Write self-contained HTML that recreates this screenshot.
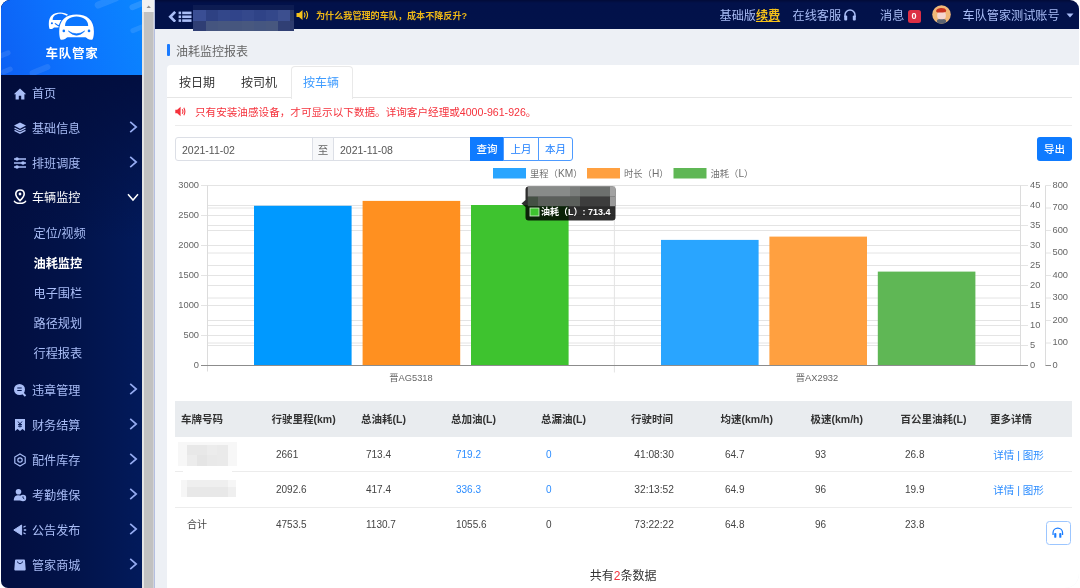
<!DOCTYPE html>
<html lang="zh-CN">
<head>
<meta charset="utf-8">
<title>油耗监控报表</title>
<style>
*{box-sizing:border-box;margin:0;padding:0}
html,body{width:1080px;height:588px;overflow:hidden;background:#fff}
body{font-family:"Liberation Sans","Noto Sans CJK SC",sans-serif;font-size:12px;color:#333;position:relative}
.abs{position:absolute}
#frame{will-change:transform;position:absolute;left:1px;top:0;width:1078px;height:588px;border-radius:9px 9px 14px 7px;overflow:hidden;background:#edf0f5}
/* sidebar */
#side{position:absolute;left:0;top:0;width:141px;height:588px;background:linear-gradient(180deg,rgba(2,12,58,.8) 75px,rgba(2,12,58,0) 240px),linear-gradient(90deg,#020e40 0%,#021349 50%,#021a5b 100%)}
#logo{position:absolute;left:0;top:0;width:141px;height:75px;background:linear-gradient(72deg,#0d60f4 0%,#0c72fe 45%,#0a86ff 100%);overflow:hidden}
#logo .t{position:absolute;left:0;width:141px;top:45px;text-align:center;color:#fff;font-weight:bold;font-size:12.5px;letter-spacing:0.8px;line-height:18px;padding-left:1px}
.mi{position:absolute;left:0;width:141px;height:20px;line-height:20px;color:#a9bdf6;font-size:12px}
.mi span{position:absolute;left:31px;top:0.8px;font-size:12.1px;white-space:nowrap}
.mi svg.ic{position:absolute;left:12px;top:3px;width:14px;height:14px}
.mi svg.ch{position:absolute;left:127.3px;top:2.8px;width:10px;height:12px}
.mi.on{color:#fff}
.si{position:absolute;left:32.5px;height:20px;line-height:21px;color:#a9bdf6;font-size:12.2px;white-space:nowrap}
.si.on{color:#fff;font-weight:bold}
/* scrollbar */
#sb{position:absolute;left:141px;top:0;width:12px;height:588px;background:linear-gradient(90deg,#e4e4e4 0,#e4e4e4 1.8px,#c1c1c1 1.8px,#c1c1c1 11.3px,#d2d2d8 11.3px,#d2d2d8 100%)}
#sb .up{position:absolute;left:0;top:0;width:12px;height:12px;background:#f1f1f1}
#sbl{position:absolute;left:153px;top:0;width:1.4px;height:588px;background:#b4bfe0}
/* top bar */
#top{position:absolute;left:154px;top:0;width:924px;height:29px;background:linear-gradient(180deg,#020b38 0,#02114a 3px,#02124a 100%)}
#top .tx{position:absolute;top:7px;height:18px;line-height:18px;font-size:12.15px;color:#a9bdf6;white-space:nowrap}
/* main */
#panel{position:absolute;left:166px;top:65px;width:912px;height:523px;background:#fff}

#ttl{position:absolute;left:175px;top:42.5px;height:18px;line-height:18px;font-size:12px;color:#666;white-space:nowrap}
#ttlbar{position:absolute;left:166px;top:44.2px;width:2.7px;height:12px;background:#1a7bff;border-radius:1px}
#panel{border-radius:4px 0 0 0}
.tab{position:absolute;top:8.5px;height:18px;line-height:18px;font-size:12px;color:#333;white-space:nowrap}
.tline{position:absolute;height:1px;background:#e6e6e6;top:32px}
#tabon{position:absolute;left:124px;top:0.5px;width:62px;height:33px;border:1px solid #e9e9e9;border-bottom:none;border-radius:4px 4px 0 0;background:#fff}
.inp{position:absolute;top:72px;height:24px;border:1px solid #dcdfe6;background:#fff;font-size:10.5px;line-height:24px;color:#555;padding-left:6px;white-space:nowrap}
.btn{position:absolute;top:72px;height:24px;font-size:10.5px;line-height:22px;text-align:center;white-space:nowrap}

#thead{position:absolute;left:8px;top:335.8px;width:897px;height:36.5px;background:#e9ecef}
.th{position:absolute;top:345px;height:18px;line-height:18px;font-size:10.5px;font-weight:bold;color:#333;white-space:nowrap}
.td{position:absolute;height:18px;line-height:18px;font-size:10px;color:#444;white-space:nowrap}
.td.a{color:#2b8cff}
.rl{position:absolute;left:8px;width:897px;height:1px;background:#ececec}
</style>
</head>
<body>
<div id="frame">
  <div id="side">
    <div id="logo"><div class="abs" style="left:93px;top:-2px;width:26px;height:7px;border-radius:4px;background:rgba(255,255,255,.10);transform:rotate(-22deg)"></div>
      <div class="abs" style="left:128px;top:2px;width:18px;height:6px;border-radius:3px;background:rgba(255,255,255,.12);transform:rotate(-22deg)"></div>
      <div class="abs" style="left:129px;top:26px;width:16px;height:5px;border-radius:3px;background:rgba(255,255,255,.10);transform:rotate(-22deg)"></div>
      <div class="abs" style="left:-4px;top:52px;width:14px;height:5px;border-radius:3px;background:rgba(255,255,255,.10);transform:rotate(-22deg)"></div>
      <div class="abs" style="left:0px;top:68px;width:12px;height:5px;border-radius:3px;background:rgba(255,255,255,.10);transform:rotate(-22deg)"></div>
      <div class="abs" style="left:28px;top:67px;width:22px;height:6px;border-radius:3px;background:rgba(255,255,255,.09);transform:rotate(-22deg)"></div>
    <svg class="abs" style="left:39px;top:8px;width:64px;height:36px" viewBox="40 8 64 36">
      <g transform="translate(9.73 2.86) scale(0.66)"><path d="M59.2 31.5 C59.2 20 66 14.6 76.5 14.6 C87 14.6 93.9 20 93.9 31.5 C93.9 35 93.5 37.6 92.5 39.5 C91 39.9 89 39.6 87.5 38.7 C86.8 37.9 86 37.3 84.5 37.3 H68.5 C67 37.3 66.3 37.9 65.5 38.7 C64 39.6 62 39.9 60.5 39.5 C59.6 37.6 59.2 35 59.2 31.5 Z" fill="#fff"/><path d="M65 26 C65 20 70 16.6 76.5 16.6 C83 16.6 88.2 20 88.2 26 Z" fill="#0c70ff"/><circle cx="63.9" cy="30.8" r="1.6" fill="#0c70ff"/><path d="M68.5 31 Q76.5 38.5 84.5 31" fill="none" stroke="#0c70ff" stroke-width="1.8"/></g>
      <path d="M59.2 31.5 C59.2 20 66 14.6 76.5 14.6 C87 14.6 93.9 20 93.9 31.5 C93.9 35 93.5 37.6 92.5 39.5 C91 39.9 89 39.6 87.5 38.7 C86.8 37.9 86 37.3 84.5 37.3 H68.5 C67 37.3 66.3 37.9 65.5 38.7 C64 39.6 62 39.9 60.5 39.5 C59.6 37.6 59.2 35 59.2 31.5 Z" fill="#fff" stroke="#0c74ff" stroke-width="2.2"/><path d="M59.2 31.5 C59.2 20 66 14.6 76.5 14.6 C87 14.6 93.9 20 93.9 31.5 C93.9 35 93.5 37.6 92.5 39.5 C91 39.9 89 39.6 87.5 38.7 C86.8 37.9 86 37.3 84.5 37.3 H68.5 C67 37.3 66.3 37.9 65.5 38.7 C64 39.6 62 39.9 60.5 39.5 C59.6 37.6 59.2 35 59.2 31.5 Z" fill="#fff"/>
      <path d="M65 26 C65 20 70 16.6 76.5 16.6 C83 16.6 88.2 20 88.2 26 Z" fill="#0b76ff"/>
      <circle cx="63.8" cy="30.9" r="1.3" fill="#0b76ff"/><circle cx="89" cy="30.9" r="1.3" fill="#0b76ff"/>
      <path d="M68.3 31 Q76.5 39.6 84.7 31 Q76.5 36.6 68.3 31 Z" fill="#0b76ff" stroke="#0b76ff" stroke-width="0.6" stroke-linejoin="round"/>
    </svg><div class="t">车队管家</div></div>
    <div class="mi" style="top:83.7px"><svg class="ic" viewBox="0 0 14 14"><path d="M7 1.5 L0.8 7.2 H2.6 V12.5 H5.8 V8.8 H8.2 V12.5 H11.4 V7.2 H13.2 Z" fill="currentColor"/></svg><span>首页</span></div>
    <div class="mi" style="top:118.0px"><svg class="ic" viewBox="0 0 14 14"><path d="M7 1.5 L13 4.6 L7 7.7 L1 4.6 Z" fill="currentColor"/><path d="M1.5 7 L7 9.8 L12.5 7 M1.5 9.4 L7 12.2 L12.5 9.4" fill="none" stroke="currentColor" stroke-width="1.3"/></svg><span>基础信息</span><svg class="ch" viewBox="0 0 10 12"><path d="M2.2 0.9 L8.2 6 L2.2 11.1" fill="none" stroke="#94aaf0" stroke-width="1.7"/></svg></div>
    <div class="mi" style="top:153.0px"><svg class="ic" viewBox="0 0 14 14"><path d="M1 3 H13 M1 7 H13 M1 11 H13" stroke="currentColor" stroke-width="1.3" fill="none"/><circle cx="4" cy="3" r="1.8" fill="currentColor"/><circle cx="10" cy="7" r="1.8" fill="currentColor"/><circle cx="4" cy="11" r="1.8" fill="currentColor"/></svg><span>排班调度</span><svg class="ch" viewBox="0 0 10 12"><path d="M2.2 0.9 L8.2 6 L2.2 11.1" fill="none" stroke="#94aaf0" stroke-width="1.7"/></svg></div>
    <div class="mi on" style="top:187.5px"><svg class="ic" viewBox="0 0 14 16" style="top:1.5px;height:16px"><path d="M7 1 C4.4 1 2.8 2.8 2.8 5 C2.8 7.6 7 11.6 7 11.6 C7 11.6 11.2 7.6 11.2 5 C11.2 2.8 9.6 1 7 1 Z" fill="none" stroke="currentColor" stroke-width="1.6"/><circle cx="7" cy="5" r="1.4" fill="currentColor"/><path d="M1.2 11.8 C2.2 15.2 11.8 15.2 12.8 11.8" fill="none" stroke="currentColor" stroke-width="1.5"/></svg><span>车辆监控</span><svg class="ch" viewBox="0 0 12 10" style="left:126px;top:4px;width:12px;height:10px"><path d="M1 2.2 L6 8 L11 2.2" fill="none" stroke="currentColor" stroke-width="1.5"/></svg></div>
    <div class="mi" style="top:380.0px"><svg class="ic" viewBox="0 0 14 14"><circle cx="6.5" cy="6.5" r="5.5" fill="currentColor"/><path d="M9.5 10 L12.5 13" stroke="currentColor" stroke-width="2"/><path d="M4.3 5 H8.7 M4.3 7.5 H8.7" stroke="#02154f" stroke-width="1"/></svg><span>违章管理</span><svg class="ch" viewBox="0 0 10 12"><path d="M2.2 0.9 L8.2 6 L2.2 11.1" fill="none" stroke="#94aaf0" stroke-width="1.7"/></svg></div>
    <div class="mi" style="top:415.0px"><svg class="ic" viewBox="0 0 14 14"><path d="M2 1 H12 V13 L9.5 11 L7 13 L4.5 11 L2 13 Z" fill="currentColor"/><path d="M5 3.5 L7 6 L9 3.5 M7 6 V9.5 M5 6.5 H9 M5 8.2 H9" stroke="#02154f" stroke-width="0.9" fill="none"/></svg><span>财务结算</span><svg class="ch" viewBox="0 0 10 12"><path d="M2.2 0.9 L8.2 6 L2.2 11.1" fill="none" stroke="#94aaf0" stroke-width="1.7"/></svg></div>
    <div class="mi" style="top:450.0px"><svg class="ic" viewBox="0 0 14 14"><path d="M7 1 L12.2 4 V10 L7 13 L1.8 10 V4 Z" fill="none" stroke="currentColor" stroke-width="1.2"/><circle cx="7" cy="7" r="2.2" fill="none" stroke="currentColor" stroke-width="1.2"/></svg><span>配件库存</span><svg class="ch" viewBox="0 0 10 12"><path d="M2.2 0.9 L8.2 6 L2.2 11.1" fill="none" stroke="#94aaf0" stroke-width="1.7"/></svg></div>
    <div class="mi" style="top:485.0px"><svg class="ic" viewBox="0 0 14 14"><circle cx="5.5" cy="3.8" r="2.8" fill="currentColor"/><path d="M0.8 12.5 C0.8 8.5 3 7.3 5.5 7.3 C6.5 7.3 7.2 7.5 8 8 V12.5 Z" fill="currentColor"/><circle cx="10" cy="10" r="3.2" fill="currentColor"/><path d="M10 8.3 V10 L11.3 10.8" stroke="#02154f" stroke-width="0.9" fill="none"/></svg><span>考勤维保</span><svg class="ch" viewBox="0 0 10 12"><path d="M2.2 0.9 L8.2 6 L2.2 11.1" fill="none" stroke="#94aaf0" stroke-width="1.7"/></svg></div>
    <div class="mi" style="top:520.0px"><svg class="ic" viewBox="0 0 14 14"><path d="M0.8 7 L8.6 2 V12 Z" fill="currentColor" stroke="currentColor" stroke-width="1" stroke-linejoin="round"/><path d="M10.4 4.2 L12.6 3 M10.8 7 H13.2 M10.4 9.8 L12.6 11" stroke="currentColor" stroke-width="1.3"/></svg><span>公告发布</span><svg class="ch" viewBox="0 0 10 12"><path d="M2.2 0.9 L8.2 6 L2.2 11.1" fill="none" stroke="#94aaf0" stroke-width="1.7"/></svg></div>
    <div class="mi" style="top:555.0px"><svg class="ic" viewBox="0 0 14 14"><path d="M2 2.8 C2 2 2.5 1.5 3.3 1.5 H10.7 C11.5 1.5 12 2 12 2.8 L12.7 11.2 C12.7 12 12.2 12.5 11.4 12.5 H2.6 C1.8 12.5 1.3 12 1.3 11.2 Z" fill="currentColor"/><path d="M4.5 3.5 C5 6.3 9 6.3 9.5 3.5" stroke="#02154f" stroke-width="1" fill="none"/></svg><span>管家商城</span><svg class="ch" viewBox="0 0 10 12"><path d="M2.2 0.9 L8.2 6 L2.2 11.1" fill="none" stroke="#94aaf0" stroke-width="1.7"/></svg></div>
    <div class="si" style="top:224.0px">定位/视频</div>
    <div class="si on" style="top:254.0px">油耗监控</div>
    <div class="si" style="top:284.0px">电子围栏</div>
    <div class="si" style="top:314.0px">路径规划</div>
    <div class="si" style="top:344.0px">行程报表</div>
  </div>
  <div id="sb"><div class="up"><svg style="position:absolute;left:4px;top:4.5px;width:5.4px;height:3.4px" viewBox="0 0 6 4"><path d="M0 4 L3 0.5 L6 4 Z" fill="#8f8f8f"/></svg></div></div>
  <div id="sbl"></div>
  <div id="top" style="overflow:visible">
    <div class="abs" style="left:38.3px;top:4.7px;width:100.9px;height:5.5px;background:#0d1c52"></div>
    <div class="abs" style="left:38.3px;top:10.2px;width:12.7px;height:10.4px;background:#3a4e94"></div>
    <div class="abs" style="left:51px;top:10.2px;width:12px;height:10.4px;background:#2e4183"></div>
    <div class="abs" style="left:63px;top:10.2px;width:12px;height:10.4px;background:#33478a"></div>
    <div class="abs" style="left:75px;top:10.2px;width:12px;height:10.4px;background:#30448a"></div>
    <div class="abs" style="left:87px;top:10.2px;width:12px;height:10.4px;background:#34488c"></div>
    <div class="abs" style="left:99px;top:10.2px;width:12px;height:10.4px;background:#2f4387"></div>
    <div class="abs" style="left:111px;top:10.2px;width:12px;height:10.4px;background:#33478a"></div>
    <div class="abs" style="left:123px;top:10.2px;width:12px;height:10.4px;background:#3c4f8f"></div>
    <div class="abs" style="left:135px;top:10.2px;width:4.2px;height:10.4px;background:#2a3868"></div>
    <div class="abs" style="left:38.3px;top:20.6px;width:12.7px;height:10.2px;background:#2f3e74"></div>
    <div class="abs" style="left:51px;top:20.6px;width:12px;height:10.2px;background:#45557f"></div>
    <div class="abs" style="left:63px;top:20.6px;width:12px;height:10.2px;background:#47577f"></div>
    <div class="abs" style="left:75px;top:20.6px;width:12px;height:10.2px;background:#46567e"></div>
    <div class="abs" style="left:87px;top:20.6px;width:12px;height:10.2px;background:#48587f"></div>
    <div class="abs" style="left:99px;top:20.6px;width:12px;height:10.2px;background:#455680"></div>
    <div class="abs" style="left:111px;top:20.6px;width:12px;height:10.2px;background:#47577f"></div>
    <div class="abs" style="left:123px;top:20.6px;width:12px;height:10.2px;background:#303f74"></div>
    <div class="abs" style="left:135px;top:20.6px;width:4.2px;height:10.2px;background:#2d3b6e"></div>
    <svg class="abs" style="left:12.8px;top:10.5px;width:24px;height:11.5px" viewBox="0 0 24 11.5"><path d="M7.2 0.9 L2.3 5.75 L7.2 10.6" fill="none" stroke="#a9bdf6" stroke-width="2.7"/><g fill="#a9bdf6"><rect x="10.6" y="0.6" width="2.5" height="2.6"/><rect x="14.2" y="0.6" width="9.3" height="2.6"/><rect x="10.6" y="4.45" width="2.5" height="2.6"/><rect x="14.2" y="4.45" width="9.3" height="2.6"/><rect x="10.6" y="8.3" width="2.5" height="2.6"/><rect x="14.2" y="8.3" width="9.3" height="2.6"/></g></svg>
    <svg class="abs" style="left:141px;top:9px;width:14px;height:12px" viewBox="0 0 14 12"><path d="M0.5 4 H3 L6.5 1 V11 L3 8 H0.5 Z" fill="#f5c11a"/><path d="M8.3 3.5 Q9.8 6 8.3 8.5 M10.3 2 Q12.8 6 10.3 10" fill="none" stroke="#f5c11a" stroke-width="1.2"/></svg>
    <div class="tx" style="left:161px;font-size:9.1px;font-weight:bold;color:#efb917;margin-top:-0.5px">为什么我管理的车队，成本不降反升?</div>
    <div class="tx" style="left:564.5px">基础版<b style="color:#f5c11a;text-decoration:underline">续费</b></div>
    <div class="tx" style="left:637.5px">在线客服</div>
    <svg class="abs" style="left:688px;top:8px;width:14px;height:14px" viewBox="0 0 14 14"><path d="M2 9 V7 A5 5 0 0 1 12 7 V9" fill="none" stroke="#a9bdf6" stroke-width="1.5"/><rect x="1.2" y="7.5" width="3" height="5" rx="1" fill="#a9bdf6"/><rect x="9.8" y="7.5" width="3" height="5" rx="1" fill="#a9bdf6"/></svg>
    <div class="tx" style="left:725px">消息</div>
    <div class="abs" style="left:752.5px;top:9.5px;width:13.2px;height:13.6px;border-radius:2.5px;background:#dc2f45;color:#fff;font-size:9px;font-weight:bold;line-height:13.5px;text-align:center">0</div>
    <svg class="abs" style="left:777px;top:5.1px;width:19px;height:19px" viewBox="0 0 19 19"><defs><clipPath id="av"><circle cx="9.5" cy="9.5" r="9.3"/></clipPath></defs><circle cx="9.5" cy="9.5" r="9.3" fill="#f0b878"/><g clip-path="url(#av)"><path d="M5 19 V15.4 C5 13.6 14 13.6 14 15.4 V19 Z" fill="#5d6572"/><rect x="5.2" y="6.8" width="8.6" height="7.4" rx="3.2" fill="#f5d6d0"/><path d="M4.2 6.2 C4.2 2.4 13.8 2 14.2 5.6 C14.4 7.4 12 7.6 9.5 7.4 C7 7.6 4.2 7.8 4.2 6.2 Z" fill="#c8321f"/></g></svg>
    <div class="tx" style="left:807.5px">车队管家测试账号</div>
    <svg class="abs" style="left:910.5px;top:13px;width:8px;height:5px" viewBox="0 0 8 5"><path d="M0.5 0.5 H7.5 L4 4.5 Z" fill="#a9bdf6"/></svg>
  </div>
  <div id="ttlbar"></div>
  <div id="ttl">油耗监控报表</div>
  <div id="panel">
    <div class="tline" style="left:0;width:124px"></div>
    <div class="tline" style="left:185px;width:720px"></div>
    <div id="tabon"></div>
    <div class="tab" style="left:12px">按日期</div>
    <div class="tab" style="left:74px">按司机</div>
    <div class="tab" style="left:136px;color:#3d9bff">按车辆</div>
    <svg class="abs" style="left:7.5px;top:41px;width:11px;height:11px" viewBox="0 0 11 11"><path d="M0.3 3.8 H2.2 L5.6 0.8 V10.2 L2.2 7.2 H0.3 Z" fill="#f5333d"/><path d="M7.2 3.2 Q8.7 5.5 7.2 7.8 M8.8 1.8 Q11 5.5 8.8 9.2" fill="none" stroke="#f5333d" stroke-width="1.1"/></svg>
    <div class="abs" style="left:28px;top:37.5px;height:18px;line-height:18px;font-size:10.6px;color:#f5333d;white-space:nowrap">只有安装油感设备，才可显示以下数据。详询客户经理或4000-961-926。</div>
    <div class="abs" style="left:8px;top:60px;width:897px;height:1px;background:#ececec"></div>
    <div class="inp" style="left:8px;width:138px;border-radius:3px 0 0 3px">2021-11-02</div>
    <div class="inp" style="left:145px;width:22px;padding:0;text-align:center;color:#666;background:#f7f8fa">至</div>
    <div class="inp" style="left:166px;width:138px">2021-11-08</div>
    <div class="btn" style="left:303px;width:34px;background:#0f7bff;color:#fff;font-weight:500;line-height:24px">查询</div>
    <div class="btn" style="left:336px;width:36px;border:1px solid #4e9bff;color:#1a7dff;background:#fff">上月</div>
    <div class="btn" style="left:371px;width:35px;border:1px solid #4e9bff;color:#1a7dff;background:#fff;border-radius:0 3px 3px 0">本月</div>
    <div class="btn" style="left:870px;width:35px;background:#0f7bff;color:#fff;font-weight:500;line-height:24px;border-radius:3px">导出</div>
    <svg id="chart" class="abs" style="left:0;top:95px;width:911px;height:230px" viewBox="167 160 911 230" font-family="Liberation Sans, Noto Sans CJK SC, sans-serif" font-size="9.3" fill="#666">
    <path d="M201 185.5 H1020.5" stroke="#e4e4e4" stroke-width="1"/>
    <path d="M201 215.5 H1020.5" stroke="#e4e4e4" stroke-width="1"/>
    <path d="M201 245.5 H1020.5" stroke="#e4e4e4" stroke-width="1"/>
    <path d="M201 275.5 H1020.5" stroke="#e4e4e4" stroke-width="1"/>
    <path d="M201 305.5 H1020.5" stroke="#e4e4e4" stroke-width="1"/>
    <path d="M201 335.5 H1020.5" stroke="#e4e4e4" stroke-width="1"/>
    <path d="M207.5 185.5 H1028" stroke="#e4e4e4" stroke-width="1"/>
    <path d="M207.5 205.5 H1028" stroke="#e4e4e4" stroke-width="1"/>
    <path d="M207.5 225.5 H1028" stroke="#e4e4e4" stroke-width="1"/>
    <path d="M207.5 245.5 H1028" stroke="#e4e4e4" stroke-width="1"/>
    <path d="M207.5 265.5 H1028" stroke="#e4e4e4" stroke-width="1"/>
    <path d="M207.5 285.5 H1028" stroke="#e4e4e4" stroke-width="1"/>
    <path d="M207.5 305.5 H1028" stroke="#e4e4e4" stroke-width="1"/>
    <path d="M207.5 325.5 H1028" stroke="#e4e4e4" stroke-width="1"/>
    <path d="M207.5 345.5 H1028" stroke="#e4e4e4" stroke-width="1"/>
    <path d="M207.5 185.5 H1020.5" stroke="#e4e4e4" stroke-width="1"/>
    <path d="M1045.5 185.5 H1051" stroke="#e4e4e4" stroke-width="1"/>
    <path d="M207.5 208.0 H1020.5" stroke="#e4e4e4" stroke-width="1"/>
    <path d="M1045.5 208.0 H1051" stroke="#e4e4e4" stroke-width="1"/>
    <path d="M207.5 230.5 H1020.5" stroke="#e4e4e4" stroke-width="1"/>
    <path d="M1045.5 230.5 H1051" stroke="#e4e4e4" stroke-width="1"/>
    <path d="M207.5 253.0 H1020.5" stroke="#e4e4e4" stroke-width="1"/>
    <path d="M1045.5 253.0 H1051" stroke="#e4e4e4" stroke-width="1"/>
    <path d="M207.5 275.5 H1020.5" stroke="#e4e4e4" stroke-width="1"/>
    <path d="M1045.5 275.5 H1051" stroke="#e4e4e4" stroke-width="1"/>
    <path d="M207.5 298.0 H1020.5" stroke="#e4e4e4" stroke-width="1"/>
    <path d="M1045.5 298.0 H1051" stroke="#e4e4e4" stroke-width="1"/>
    <path d="M207.5 320.5 H1020.5" stroke="#e4e4e4" stroke-width="1"/>
    <path d="M1045.5 320.5 H1051" stroke="#e4e4e4" stroke-width="1"/>
    <path d="M207.5 343.0 H1020.5" stroke="#e4e4e4" stroke-width="1"/>
    <path d="M1045.5 343.0 H1051" stroke="#e4e4e4" stroke-width="1"/>
    <path d="M207.5 185.5 V371.5" stroke="#dcdcdc" stroke-width="1"/>
    <path d="M614.4 185.5 V372.5" stroke="#e4e4e4" stroke-width="1"/>
    <path d="M1020.5 185.5 V365.5" stroke="#dcdcdc" stroke-width="1"/>
    <path d="M1045.5 185.5 V365.5" stroke="#dcdcdc" stroke-width="1"/>
    <rect x="254.0" y="205.8" width="97.6" height="159.7" fill="#0099ff"/>
    <rect x="362.6" y="200.9" width="97.6" height="164.6" fill="#ff9020"/>
    <rect x="471.0" y="205.0" width="97.6" height="160.5" fill="#3ec32f"/>
    <rect x="661.0" y="239.9" width="97.6" height="125.6" fill="#29a5ff"/>
    <rect x="769.4" y="236.6" width="97.6" height="128.9" fill="#ffa040"/>
    <rect x="877.8" y="271.6" width="97.6" height="93.9" fill="#5fb755"/>
    <path d="M201 365.5 H1028 M1045.5 365.5 H1051" stroke="#8c8c8c" stroke-width="1"/>
    <text x="199" y="187.7" text-anchor="end">3000</text>
    <text x="199" y="217.7" text-anchor="end">2500</text>
    <text x="199" y="247.7" text-anchor="end">2000</text>
    <text x="199" y="277.7" text-anchor="end">1500</text>
    <text x="199" y="307.7" text-anchor="end">1000</text>
    <text x="199" y="337.7" text-anchor="end">500</text>
    <text x="199" y="367.7" text-anchor="end">0</text>
    <text x="1030" y="187.7">45</text>
    <text x="1030" y="207.7">40</text>
    <text x="1030" y="227.7">35</text>
    <text x="1030" y="247.7">30</text>
    <text x="1030" y="267.7">25</text>
    <text x="1030" y="287.7">20</text>
    <text x="1030" y="307.7">15</text>
    <text x="1030" y="327.7">10</text>
    <text x="1030" y="347.7">5</text>
    <text x="1030" y="367.7">0</text>
    <text x="1052.5" y="187.7">800</text>
    <text x="1052.5" y="210.2">700</text>
    <text x="1052.5" y="232.7">600</text>
    <text x="1052.5" y="255.2">500</text>
    <text x="1052.5" y="277.7">400</text>
    <text x="1052.5" y="300.2">300</text>
    <text x="1052.5" y="322.7">200</text>
    <text x="1052.5" y="345.2">100</text>
    <text x="1052.5" y="367.7">0</text>
    <text x="411" y="380.5" text-anchor="middle">晋AG5318</text>
    <text x="817" y="380.5" text-anchor="middle">晋AX2932</text>
    <rect x="493" y="168" width="33" height="10.5" fill="#29a5ff"/><text x="530" y="176.5" fill="#707070">里程（<tspan font-size="10.2">KM</tspan>）</text>
    <rect x="587" y="168" width="33" height="10.5" fill="#ffa040"/><text x="624" y="176.5" fill="#707070">时长（<tspan font-size="10.2">H</tspan>）</text>
    <rect x="673.5" y="168" width="33" height="10.5" fill="#5fb755"/><text x="710.5" y="176.5" fill="#707070">油耗（<tspan font-size="10.2">L</tspan>）</text>
    <path d="M525.5 189.5 Q525.5 186.5 528.5 186.5 H612.5 Q615.5 186.5 615.5 189.5 V217.5 Q615.5 220.5 612.5 220.5 H528.5 Q525.5 220.5 525.5 217.5 V207 L521.5 203.5 L525.5 200 Z" fill="rgba(0,0,0,0.82)"/>
    <rect x="527.8" y="186.7" width="42.2" height="10" fill="#888b89"/>
    <rect x="570" y="186.7" width="10" height="10" fill="#7b7e7c"/>
    <rect x="580" y="186.7" width="30" height="10" fill="#6d706e"/>
    <rect x="610" y="186.7" width="5.2" height="10" fill="#a2a2a2"/>
    <rect x="527.8" y="196.7" width="10.2" height="9.5" fill="#445044"/>
    <rect x="538" y="196.7" width="42" height="9.5" fill="#5b5f5b"/>
    <rect x="580" y="196.7" width="30" height="9.5" fill="#3d3d3d"/>
    <rect x="610" y="196.7" width="5.2" height="9.5" fill="#9a9a9a"/>
    <rect x="530" y="208" width="9" height="8" fill="#3ec32f" stroke="#d8f5d4" stroke-width="0.8"/>
    <text x="541" y="215.3" fill="#fff" font-weight="bold" font-size="9">油耗（L）: 713.4</text>
    </svg>
    <div id="thead"></div>
    <div class="th" style="left:14px">车牌号码</div>
    <div class="th" style="left:104.5px">行驶里程(km)</div>
    <div class="th" style="left:194px">总油耗(L)</div>
    <div class="th" style="left:284px">总加油(L)</div>
    <div class="th" style="left:374px">总漏油(L)</div>
    <div class="th" style="left:464px">行驶时间</div>
    <div class="th" style="left:553.5px">均速(km/h)</div>
    <div class="th" style="left:643.5px">极速(km/h)</div>
    <div class="th" style="left:733.5px">百公里油耗(L)</div>
    <div class="th" style="left:823px">更多详情</div>
    <div class="td" style="left:109.0px;top:380.5px">2661</div>
    <div class="td" style="left:199px;top:380.5px">713.4</div>
    <div class="td a" style="left:289px;top:380.5px">719.2</div>
    <div class="td a" style="left:379px;top:380.5px">0</div>
    <div class="td" style="left:467.3px;font-size:10.2px;top:380.5px">41:08:30</div>
    <div class="td" style="left:558.0px;top:380.5px">64.7</div>
    <div class="td" style="left:648.0px;top:380.5px">93</div>
    <div class="td" style="left:738.0px;top:380.5px">26.8</div>
    <div class="td a" style="font-size:10.5px;left:826.3px;top:380.5px">详情 | 图形</div>
    <div class="td" style="left:109.0px;top:416px">2092.6</div>
    <div class="td" style="left:199px;top:416px">417.4</div>
    <div class="td a" style="left:289px;top:416px">336.3</div>
    <div class="td a" style="left:379px;top:416px">0</div>
    <div class="td" style="left:467.3px;font-size:10.2px;top:416px">32:13:52</div>
    <div class="td" style="left:558.0px;top:416px">64.9</div>
    <div class="td" style="left:648.0px;top:416px">96</div>
    <div class="td" style="left:738.0px;top:416px">19.9</div>
    <div class="td a" style="font-size:10.5px;left:826.3px;top:416px">详情 | 图形</div>
    <div class="td" style="left:20px;top:451px">合计</div>
    <div class="td" style="left:109.0px;top:451px">4753.5</div>
    <div class="td" style="left:199px;top:451px">1130.7</div>
    <div class="td" style="left:289px;top:451px">1055.6</div>
    <div class="td" style="left:379px;top:451px">0</div>
    <div class="td" style="left:467.3px;font-size:10.2px;top:451px">73:22:22</div>
    <div class="td" style="left:558.0px;top:451px">64.8</div>
    <div class="td" style="left:648.0px;top:451px">96</div>
    <div class="td" style="left:738.0px;top:451px">23.8</div>
    <div class="rl" style="top:406.2px"></div>
    <div class="rl" style="top:441.9px"></div>
    <div class="abs" style="left:11.3px;top:377px;width:58.7px;height:23.6px;background:#f7f7f7"></div>
    <div class="abs" style="left:19.6px;top:380.2px;width:41.4px;height:20.4px;background:#ececec"></div>
    <div class="abs" style="left:19.6px;top:380.2px;width:20.4px;height:10px;background:#e8e8e8"></div>
    <div class="abs" style="left:30px;top:390.2px;width:10px;height:10.4px;background:#e5e5e5"></div>
    <div class="abs" style="left:40px;top:390.2px;width:10px;height:10.4px;background:#e9e9e9"></div>
    <div class="abs" style="left:50px;top:380.2px;width:11px;height:20.4px;background:#eaeaea"></div>
    <div class="abs" style="left:15.8px;top:405px;width:49.2px;height:4px;background:#ffffff"></div>
    <div class="abs" style="left:13.8px;top:414.9px;width:55.5px;height:17.2px;background:#f6f6f6"></div>
    <div class="abs" style="left:19.6px;top:414.9px;width:41.4px;height:6.8px;background:#efefef"></div>
    <div class="abs" style="left:19.6px;top:421.7px;width:41.4px;height:10.4px;background:#e8e8e8"></div>
    <div class="abs" style="left:61px;top:421.7px;width:8.3px;height:10.4px;background:#efefef"></div>
    <div class="abs" style="left:422.8px;top:501.8px;height:18px;line-height:18px;font-size:12px;color:#333;white-space:nowrap">共有<span style="color:#f5333d">2</span>条数据</div>
    <div class="abs" style="left:879px;top:455.5px;width:25px;height:24.5px;border:1.4px solid #9cc6ff;border-radius:3.5px;background:#fff"><svg style="position:absolute;left:4.3px;top:4.2px;width:13.6px;height:13.6px" viewBox="0 0 14 14"><path d="M2.1 9.2 V7 A4.9 4.9 0 0 1 11.9 7 V9.2" fill="none" stroke="#1a7dff" stroke-width="1.3"/><rect x="3.3" y="7.2" width="2.2" height="5" rx="0.9" fill="#1a7dff"/><rect x="8.5" y="7.2" width="2.2" height="5" rx="0.9" fill="#1a7dff"/></svg></div>
  </div>
</div>
</body>
</html>
